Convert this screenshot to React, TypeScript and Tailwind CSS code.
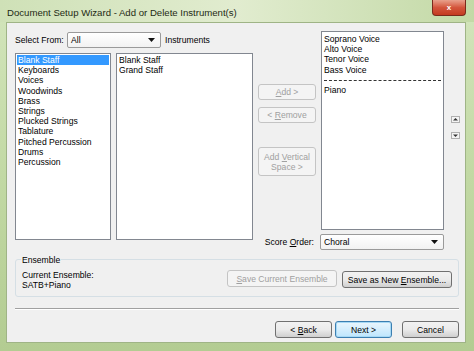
import React from 'react';

const groups = ['Blank Staff', 'Keyboards', 'Voices', 'Woodwinds', 'Brass', 'Strings', 'Plucked Strings', 'Tablature', 'Pitched Percussion', 'Drums', 'Percussion'];
const instruments = ['Blank Staff', 'Grand Staff'];
const voices = ['Soprano Voice', 'Alto Voice', 'Tenor Voice', 'Bass Voice'];

function Combo({ value, className }: { value: string; className: string }) {
  return (
    <div className={`flex items-center justify-between h-[16px] border border-[#9a9a9a] rounded-[2px] bg-gradient-to-b from-white to-[#f2f2f2] pl-[3px] pr-[5px] leading-[10px] ${className}`}>
      <span>{value}</span>
      <svg width="7" height="4" viewBox="0 0 7 4"><path d="M0 0h7L3.5 4z" fill="#111" /></svg>
    </div>
  );
}

function Btn({ children, disabled, focus, className = '' }: { children: React.ReactNode; disabled?: boolean; focus?: boolean; className?: string }) {
  const tone = disabled
    ? 'border-[#c4c4c4] bg-[#f4f4f4] text-[#a0a0a0]'
    : focus
      ? 'border-[#3c7fb1] bg-gradient-to-b from-[#eaf6fd] to-[#bee6fd] text-black shadow-[inset_0_0_0_1px_#a7d9f5]'
      : 'border-[#707070] bg-gradient-to-b from-[#f2f2f2] via-[#ebebeb] to-[#cfcfcf] text-black';
  return (
    <div className={`flex items-center justify-center text-center rounded-[3px] border leading-[10px] ${tone} ${className}`}>{children}</div>
  );
}

export default function App() {
  return (
    <div className="w-[474px] h-[351px] overflow-hidden bg-gradient-to-b from-[#d3e5bc] via-[#c2d9a4] to-[#b3cc92] text-[8.6px] text-black" style={{ fontFamily: '"Liberation Sans", Arial, sans-serif' }}>
      <div className="flex h-[22px] pl-[7px] pr-[8px] bg-gradient-to-r from-[#cfe1b7] via-[#e1eccf] to-[#c3d9a6]">
        <div className="flex-1 pt-[6px] text-[9.6px] text-[#1e2a14]">Document Setup Wizard - Add or Delete Instrument(s)</div>
        <div className="w-[34px] h-[16px] rounded-b-[4px] border border-t-0 border-[#7a2a1c] bg-gradient-to-b from-[#e8a08c] via-[#d3553c] to-[#c43a20] flex items-center justify-center">
          <span className="text-white font-bold text-[8px] leading-none">x</span>
        </div>
      </div>
      <div className="ml-[6px] mr-[8px] h-[321px] bg-[#f0f0f0] border border-[#9fb486] flex flex-col pl-[8px] pr-[7px] pt-[8px]">
        <div className="flex">
          <div className="flex flex-col w-[238px] pt-[1px]">
            <div className="flex items-center h-[16px]">
              <span className="w-[52px]">Select From:</span>
              <Combo value="All" className="w-[94px]" />
              <span className="ml-[4px]">Instruments</span>
            </div>
            <div className="flex gap-[5px] mt-[5px]">
              <div className="w-[96px] h-[187px] bg-white border border-[#828790] p-[1px] leading-[10.2px]">
                {groups.map((g, i) => (
                  <div key={g} className={i === 0 ? 'bg-[#3399ff] text-white pl-[1px]' : 'pl-[1px]'}>{g}</div>
                ))}
              </div>
              <div className="w-[137px] h-[187px] bg-white border border-[#828790] p-[1px] pl-[2px] leading-[10.2px]">
                {instruments.map((g) => <div key={g}>{g}</div>)}
              </div>
            </div>
          </div>
          <div className="flex flex-col ml-[5px]">
            <div className="flex">
              <div className="flex flex-col w-[58px] pt-[53px]">
                <Btn disabled className="h-[16px]"><span><u>A</u>dd &gt;</span></Btn>
                <Btn disabled className="h-[16px] mt-[7px]"><span>&lt; <u>R</u>emove</span></Btn>
                <Btn disabled className="h-[29px] mt-[24px]"><span>Add <u>V</u>ertical<br />Space &gt;</span></Btn>
              </div>
              <div className="w-[123px] h-[199px] ml-[5px] bg-white border border-[#828790] pt-[2px] px-[2px] leading-[10.2px]">
                {voices.map((v) => <div key={v}>{v}</div>)}
                <div className="border-t border-dashed border-[#333] mt-[5px] mb-[4px]" />
                <div>Piano</div>
              </div>
              <div className="flex flex-col items-center w-[15px] ml-[4px] pt-[85px] gap-[9px]">
                <svg width="9" height="7" viewBox="0 0 9 7"><rect x="0.5" y="0.5" width="8" height="6" fill="#f4f4f4" stroke="#b0b0b0" /><path d="M2 4.5h5L4.5 2z" fill="#333" /></svg>
                <svg width="9" height="7" viewBox="0 0 9 7"><rect x="0.5" y="0.5" width="8" height="6" fill="#f4f4f4" stroke="#b0b0b0" /><path d="M2 2.5h5L4.5 5z" fill="#333" /></svg>
              </div>
            </div>
            <div className="flex items-center mt-[4px] h-[16px]">
              <span className="w-[57px] text-right pr-[1px]">Score <u>O</u>rder:</span>
              <Combo value="Choral" className="w-[124px] ml-[5px]" />
            </div>
          </div>
        </div>
        <div className="relative mt-[9px] h-[38px] w-[444px] border border-[#d5dfe5] rounded-[3px] pl-[6px] pt-[9px] flex items-start">
          <span className="absolute -top-[6px] left-[5px] bg-[#f0f0f0] px-[1px]">Ensemble</span>
          <div className="flex-1 leading-[10px] pt-[1px]">
            <div>Current Ensemble:</div>
            <div>SATB+Piano</div>
          </div>
          <Btn disabled className="w-[110px] h-[17px] mt-[1px]"><span><u>S</u>ave Current Ensemble</span></Btn>
          <Btn className="w-[110px] h-[17px] ml-[5px] mr-[6px] mt-[2px]"><span>Save as New <u>E</u>nsemble...</span></Btn>
        </div>
        <div className="mt-[11px] w-[444px] h-[2px] border-t border-[#a0a0a0] border-b border-b-white" />
        <div className="flex justify-end mt-[11px] w-[444px]">
          <Btn className="w-[57px] h-[17px]"><span>&lt; <u>B</u>ack</span></Btn>
          <Btn focus className="w-[57px] h-[17px] ml-[3px]"><span>Next &gt;</span></Btn>
          <Btn className="w-[57px] h-[17px] ml-[10px]"><span>Cancel</span></Btn>
        </div>
      </div>
    </div>
  );
}
